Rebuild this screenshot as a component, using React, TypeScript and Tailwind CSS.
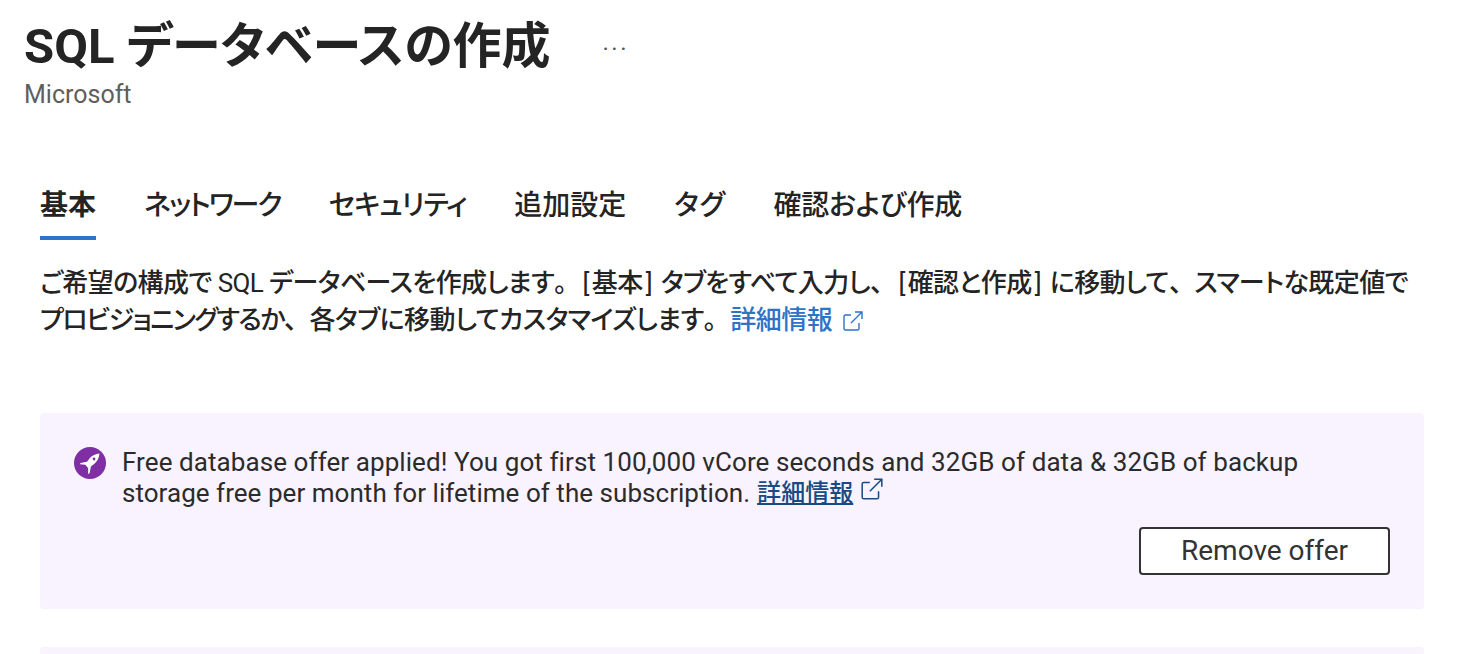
const font = "font-['Roboto','Noto_Sans_CJK_JP',sans-serif] [font-feature-settings:'palt']";

const tabs = [
  { label: "基本", cls: "font-bold" },
  { label: "ネットワーク", cls: "font-medium tracking-[-1.9px]" },
  { label: "セキュリティ", cls: "font-medium tracking-[-1.2px]" },
  { label: "追加設定", cls: "font-medium" },
  { label: "タグ", cls: "font-medium tracking-[0.7px]" },
  { label: "確認および作成", cls: "font-medium tracking-[-0.3px]" },
];

const ExternalIcon = ({ className }: { className: string }) => (
  <svg viewBox="0 0 22 22" fill="none" stroke="currentColor" strokeWidth="1.4" className={className}>
    <path d="M9 5H3.5A1.5 1.5 0 0 0 2 6.5v12A1.5 1.5 0 0 0 3.5 20h12a1.5 1.5 0 0 0 1.5-1.5V13" />
    <path d="M9 13L20 2M13 2h7v7" />
  </svg>
);

const RocketBadge = () => (
  <svg viewBox="0 0 32 32" className="w-8 h-8 shrink-0">
    <circle cx="16" cy="16" r="16" fill="#7f2fa3" />
    <path fill="#fff" d="M25.5 6.5c-4 .3-7.3 1.9-9.6 4.6l-2.9 3.6-6.5 1.2-.5 1.4 5.4.4 1.4 1.9 1.4 1.6-.1 5.8 1.5-.8 1.3-6.6 3.5-2.9c2.7-2.3 4.8-5.6 5-9.6z" />
    <circle cx="20" cy="12" r="1.4" fill="#7f2fa3" />
  </svg>
);

const Punct = ({ children }: { children: string }) => (
  <span className="[font-feature-settings:normal]">{children}</span>
);

const Bracket = ({ children }: { children: string }) => (
  <span className="mx-[3px] font-normal">{children}</span>
);

export default function App() {
  return (
    <div className={`${font} w-[1476px] h-[654px] overflow-hidden bg-white text-[#242424]`}>
      <header className="pl-6 pt-[17px]">
        <div className="flex items-center">
          <h1 className="text-[49px] leading-[60px] font-bold">SQL データベースの作成</h1>
          <span className="ml-[52px] mt-1 text-[24px] leading-none tracking-[2.5px] text-[#555]">···</span>
        </div>
        <p className="pt-px text-[25px] leading-[34px] text-[#605e5c]">Microsoft</p>
      </header>

      <div className="px-10">
        <nav className="flex gap-12 mt-[75px]">
          {tabs.map((t, i) => (
            <div key={t.label} className="flex flex-col">
              <span className={`text-[28px] leading-[38px] ${t.cls}`}>{t.label}</span>
              <span className={`h-1 mt-[11px] ${i === 0 ? "bg-[#2f72c8]" : "bg-transparent"}`} />
            </div>
          ))}
        </nav>

        <div className="mt-[25px] text-[26px] leading-[37px] font-medium w-[1420px]">
          <p className="tracking-[-0.6px] whitespace-nowrap">
            ご希望の構成で <span className="font-normal">SQL</span> データベースを作成します<Punct>。</Punct><Bracket>[</Bracket>基本<Bracket>]</Bracket> タブをすべて入力し<Punct>、</Punct><Bracket>[</Bracket>確認と作成<Bracket>]</Bracket> に移動して<Punct>、</Punct>スマートな既定値で
          </p>
          <p className="flex items-center whitespace-nowrap">
            <span className="tracking-[-1.5px]">プロビジョニングするか</span>
            <span className="tracking-[-0.5px]"><Punct>、</Punct>各タブに移動してカスタマイズします<Punct>。</Punct></span>
            <a className="ml-px text-[#2f72c8] inline-flex items-center gap-[10px] font-medium tracking-[-0.5px]">
              詳細情報
              <ExternalIcon className="w-[22px] h-[22px]" />
            </a>
          </p>
        </div>

        <section className="mt-[74px] w-[1384px] h-[196px] bg-[#f8f3fe] rounded-[4px] px-[34px] pt-[34px]">
          <div className="flex gap-4">
            <RocketBadge />
            <div className="text-[26px] leading-[31px] text-[#2b2b2b]">
              <p className="tracking-[0.08px]">
                Free database offer applied! You got first 100,000 vCore seconds and 32GB of data &amp; 32GB of backup
              </p>
              <p className="flex items-center h-[31px] whitespace-nowrap tracking-[0.04px]">
                <span>storage free per month for lifetime of the subscription.</span>
                <a className="ml-[7px] text-[#1a4a82] underline font-medium text-[24px]">詳細情報</a>
                <ExternalIcon className="ml-[7px] -mt-[10px] w-[24px] h-[24px] text-[#1a4a82]" />
              </p>
            </div>
          </div>
          <div className="flex justify-end mt-[18px]">
            <button className="w-[251px] h-[48px] bg-white border-2 border-[#333] rounded-[4px] text-[28px] leading-none text-[#333]">
              Remove offer
            </button>
          </div>
        </section>

        <div className="mt-[38px] w-[1384px] h-[60px] bg-[#f8f3fe] rounded-[4px]" />
      </div>
    </div>
  );
}
